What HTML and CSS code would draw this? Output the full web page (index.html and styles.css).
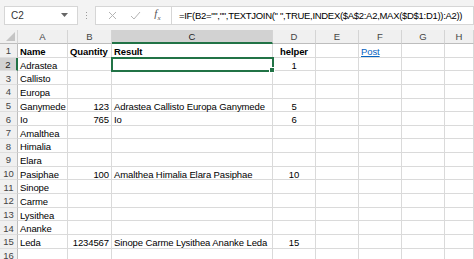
FILE: index.html
```html
<!DOCTYPE html>
<html>

<head>
    <meta charset="utf-8">
    <title>Sheet</title>
    <link rel="stylesheet" href="styles.css">
</head>

<body>
    <div class="formula-bar">
        <div class="name-box">
            <span>C2</span>
            <svg class="drop" width="7" height="4" viewBox="0 0 7 4"><path d="M0 0h7L3.5 4z" fill="#666"/></svg>
        </div>
        <div class="dots"><i></i><i></i><i></i></div>
        <div class="buttons">
            <svg width="9" height="9" viewBox="0 0 9 9"><path d="M1 1l7 7M8 1l-7 7" stroke="#b4b4b4" stroke-width="1"/></svg>
            <svg width="11" height="9" viewBox="0 0 11 9"><path d="M1 5l3 3 6-7" stroke="#b4b4b4" stroke-width="1" fill="none"/></svg>
            <span class="fx">f<sub>x</sub></span>
        </div>
        <div class="formula">=IF(B2="","",TEXTJOIN(" ",TRUE,INDEX($A$2:A2,MAX($D$1:D1)):A2))</div>
    </div>

    <div class="sheet">
        <div class="corner"><svg width="9" height="9" viewBox="0 0 9 9"><path d="M9 0v9H0z" fill="#c4c4c4"/></svg></div>
        <div class="col-head">A</div>
        <div class="col-head">B</div>
        <div class="col-head selected">C</div>
        <div class="col-head">D</div>
        <div class="col-head">E</div>
        <div class="col-head">F</div>
        <div class="col-head">G</div>
        <div class="col-head">H</div>

        <div class="row-head">1</div>
        <div class="cell bold">Name</div>
        <div class="cell bold">Quantity</div>
        <div class="cell bold">Result</div>
        <div class="cell bold center">helper</div>
        <div class="cell"></div>
        <div class="cell"><a href="#">Post</a></div>
        <div class="cell"></div>
        <div class="cell"></div>

        <div class="row-head selected">2</div>
        <div class="cell">Adrastea</div>
        <div class="cell"></div>
        <div class="cell active"></div>
        <div class="cell center">1</div>
        <div class="cell"></div>
        <div class="cell"></div>
        <div class="cell"></div>
        <div class="cell"></div>

        <div class="row-head">3</div>
        <div class="cell">Callisto</div>
        <div class="cell"></div><div class="cell"></div><div class="cell"></div><div class="cell"></div><div class="cell"></div><div class="cell"></div><div class="cell"></div>

        <div class="row-head">4</div>
        <div class="cell">Europa</div>
        <div class="cell"></div><div class="cell"></div><div class="cell"></div><div class="cell"></div><div class="cell"></div><div class="cell"></div><div class="cell"></div>

        <div class="row-head">5</div>
        <div class="cell">Ganymede</div>
        <div class="cell num">123</div>
        <div class="cell">Adrastea Callisto Europa Ganymede</div>
        <div class="cell center">5</div>
        <div class="cell"></div><div class="cell"></div><div class="cell"></div><div class="cell"></div>

        <div class="row-head">6</div>
        <div class="cell">Io</div>
        <div class="cell num">765</div>
        <div class="cell">Io</div>
        <div class="cell center">6</div>
        <div class="cell"></div><div class="cell"></div><div class="cell"></div><div class="cell"></div>

        <div class="row-head">7</div>
        <div class="cell">Amalthea</div>
        <div class="cell"></div><div class="cell"></div><div class="cell"></div><div class="cell"></div><div class="cell"></div><div class="cell"></div><div class="cell"></div>

        <div class="row-head">8</div>
        <div class="cell">Himalia</div>
        <div class="cell"></div><div class="cell"></div><div class="cell"></div><div class="cell"></div><div class="cell"></div><div class="cell"></div><div class="cell"></div>

        <div class="row-head">9</div>
        <div class="cell">Elara</div>
        <div class="cell"></div><div class="cell"></div><div class="cell"></div><div class="cell"></div><div class="cell"></div><div class="cell"></div><div class="cell"></div>

        <div class="row-head">10</div>
        <div class="cell">Pasiphae</div>
        <div class="cell num">100</div>
        <div class="cell">Amalthea Himalia Elara Pasiphae</div>
        <div class="cell center">10</div>
        <div class="cell"></div><div class="cell"></div><div class="cell"></div><div class="cell"></div>

        <div class="row-head">11</div>
        <div class="cell">Sinope</div>
        <div class="cell"></div><div class="cell"></div><div class="cell"></div><div class="cell"></div><div class="cell"></div><div class="cell"></div><div class="cell"></div>

        <div class="row-head">12</div>
        <div class="cell">Carme</div>
        <div class="cell"></div><div class="cell"></div><div class="cell"></div><div class="cell"></div><div class="cell"></div><div class="cell"></div><div class="cell"></div>

        <div class="row-head">13</div>
        <div class="cell">Lysithea</div>
        <div class="cell"></div><div class="cell"></div><div class="cell"></div><div class="cell"></div><div class="cell"></div><div class="cell"></div><div class="cell"></div>

        <div class="row-head">14</div>
        <div class="cell">Ananke</div>
        <div class="cell"></div><div class="cell"></div><div class="cell"></div><div class="cell"></div><div class="cell"></div><div class="cell"></div><div class="cell"></div>

        <div class="row-head">15</div>
        <div class="cell">Leda</div>
        <div class="cell num">1234567</div>
        <div class="cell">Sinope Carme Lysithea Ananke Leda</div>
        <div class="cell center">15</div>
        <div class="cell"></div><div class="cell"></div><div class="cell"></div><div class="cell"></div>

        <div class="row-head">16</div>
        <div class="cell"></div><div class="cell"></div><div class="cell"></div><div class="cell"></div><div class="cell"></div><div class="cell"></div><div class="cell"></div><div class="cell"></div>
    </div>
</body>

</html>
```
FILE: styles.css
```css
body {
    margin: 0;
    width: 474px;
    height: 259px;
    overflow: hidden;
    background-color: #fff;
    font-family: "Liberation Sans", Arial, sans-serif;
    font-size: 9.5px;
    color: #000;
}

.formula-bar {
    display: flex;
    align-items: center;
    height: 30px;
    padding-left: 4px;
    background-color: #f3f3f3;
}

.name-box {
    display: flex;
    align-items: center;
    justify-content: space-between;
    width: 74px;
    height: 19px;
    padding: 0 9px 0 6px;
    box-sizing: border-box;
    background-color: #fff;
    border: 1px solid #d6d6d6;
    font-size: 10px;
    color: #333;
}

.dots {
    display: flex;
    flex-direction: column;
    gap: 2px;
    width: 17px;
    align-items: center;
}

.dots i {
    width: 1px;
    height: 1px;
    background-color: #9a9a9a;
}

.buttons {
    display: flex;
    align-items: center;
    justify-content: space-around;
    width: 76px;
    height: 19px;
    box-sizing: border-box;
    padding: 0 4px 0 6px;
    background-color: #fff;
    border: 1px solid #d6d6d6;
    border-right: none;
}

.fx {
    font-family: "Liberation Serif", serif;
    font-style: italic;
    font-size: 11px;
    color: #555;
}

.fx sub {
    font-size: 7px;
}

.formula {
    flex: 1;
    height: 19px;
    line-height: 18px;
    box-sizing: border-box;
    padding-left: 7px;
    background-color: #fff;
    border: 1px solid #d6d6d6;
    font-size: 9.5px;
    letter-spacing: -0.3px;
    white-space: nowrap;
    overflow: hidden;
}

.sheet {
    display: grid;
    grid-template-columns: 18px 50px 44px 161px 43px 43px 43px 43px 1fr;
    grid-template-rows: 14px repeat(16, 13.65px);
    background-color: #fff;
}

.corner,
.col-head,
.row-head {
    background-color: #f0f0f0;
    color: #444;
    box-sizing: border-box;
    border-right: 1px solid #d4d4d4;
    border-bottom: 1px solid #d4d4d4;
    display: flex;
    align-items: center;
    justify-content: center;
    font-size: 9.5px;
}

.corner {
    justify-content: flex-end;
    align-items: flex-end;
    padding: 0 2px 2px 0;
    border-bottom-color: #bdbdbd;
}

.col-head {
    border-bottom-color: #bdbdbd;
}

.col-head.selected {
    background-color: #d2d2d2;
    border-bottom: 2px solid #217346;
    color: #222;
}

.row-head {
    border-right-color: #bdbdbd;
    border-bottom-color: #dedede;
    padding-top: 1px;
}

.row-head.selected {
    background-color: #d2d2d2;
    border-right: 2px solid #217346;
    color: #222;
}

.cell {
    box-sizing: border-box;
    border-right: 1px solid #dadada;
    border-bottom: 1px solid #dadada;
    padding: 1px 2px 0;
    line-height: 13px;
    letter-spacing: -0.1px;
    white-space: nowrap;
    overflow: visible;
    position: relative;
}

.bold {
    font-weight: bold;
}

.center {
    text-align: center;
}

.num {
    text-align: right;
}

.cell a {
    color: #0563c1;
}

.cell.active {
    outline: 2px solid #217346;
    outline-offset: -1px;
    z-index: 1;
}

.cell.active::after {
    content: "";
    position: absolute;
    right: -3px;
    bottom: -3px;
    width: 4px;
    height: 4px;
    background-color: #217346;
    border: 1px solid #fff;
}
```
